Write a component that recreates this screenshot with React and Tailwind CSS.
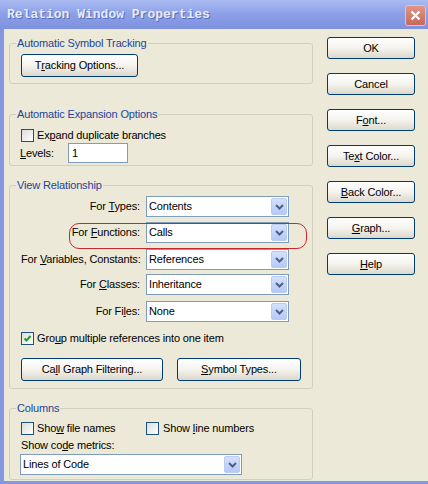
import React from 'react'

const font = { fontFamily: '"Liberation Sans", Arial, sans-serif', letterSpacing: '-0.15px' }

const Chevron = () => (
    <svg width="9" height="6" viewBox="0 0 9 6">
        <path d="M1 1 L4.5 4.5 L8 1" stroke="#4d6185" strokeWidth="2" fill="none" />
    </svg>
)

const Combo = ({ value, className = "" }) => (
    <div className={"h-[21px] bg-white border border-[#7f9db9] flex items-center " + className}>
        <span className="pl-[2px] text-[11px] leading-none text-black flex-1">{value}</span>
        <div className="w-[16px] h-[17px] mr-[1px] rounded-[2px] border border-[#b9cbf3] bg-gradient-to-b from-[#d4e1fc] to-[#b5c9f7] flex items-center justify-center">
            <Chevron />
        </div>
    </div>
)

const Button = ({ children, className = "" }) => (
    <div className={"rounded-[3px] border border-[#003c74] bg-gradient-to-b from-white via-[#f4f3ee] to-[#dcd8cb] flex items-center justify-center text-[11px] text-black " + className}>
        {children}
    </div>
)

const Checkbox = ({ checked }) => (
    <div className="w-[13px] h-[13px] border border-[#1c5180] bg-gradient-to-br from-[#dcdcd7] to-white flex items-center justify-center shrink-0">
        {checked && (
            <svg width="9" height="9" viewBox="0 0 9 9">
                <path d="M1.5 4.5 L3.5 6.5 L7.5 2" stroke="#21a121" strokeWidth="2" fill="none" />
            </svg>
        )}
    </div>
)

const Group = ({ title, children, className = "" }) => (
    <fieldset className={"border border-[#d0d0bf] rounded-[3px] px-[11px] " + className}>
        <legend className="-ml-[5px] px-[1px] text-[11px] leading-[14px] text-[#22449a]">{title}</legend>
        {children}
    </fieldset>
)

const Row = ({ label, value, className = "" }) => (
    <div className={"flex items-center gap-[6px] " + className}>
        <div className="w-[119px] text-right text-[11px] text-black whitespace-nowrap">{label}</div>
        <Combo value={value} className="w-[143px]" />
    </div>
)

export default function App() {
    return (
        <div className="w-[428px] h-[484px] bg-[#ece9d8] flex flex-col overflow-hidden" style={font}>

            {/* title bar */}
            <div className="h-[29px] shrink-0 bg-gradient-to-b from-[#a9bbf1] via-[#8c9fe6] to-[#7d91df] flex items-center justify-between pl-[7px] pr-[2px]">
                <span
                    className="text-[13px] font-bold text-[#e6ebfa] [text-shadow:1px_1px_0_#5a6cb8]"
                    style={{ fontFamily: '"Liberation Mono", "Courier New", monospace', letterSpacing: 0 }}
                >
                    Relation Window Properties
                </span>
                <div className="w-[21px] h-[21px] rounded-[3px] border border-[#eac0b8] bg-gradient-to-b from-[#dc9688] to-[#c4695b] flex items-center justify-center mt-[2px]">
                    <svg width="11" height="11" viewBox="0 0 11 11">
                        <path d="M1.5 1.5 L9.5 9.5 M9.5 1.5 L1.5 9.5" stroke="white" strokeWidth="2.2" />
                    </svg>
                </div>
            </div>

            <div className="flex flex-1 border-l-4 border-b-[3px] border-[#8396e0]">

                {/* left column */}
                <div className="w-[309px] pl-[5px] pt-[7px] flex flex-col">

                    <Group title="Automatic Symbol Tracking" className="pt-[4px] pb-[6px]">
                        <Button className="w-[117px] h-[23px]">T<u>r</u>acking Options...</Button>
                    </Group>

                    <Group title="Automatic Expansion Options" className="mt-[23px] pt-[6px] pb-[2px]">
                        <div className="h-[16px] flex items-center gap-[3px] text-[11px]">
                            <Checkbox />
                            <span>Ex<u>p</u>and duplicate branches</span>
                        </div>
                        <div className="flex items-center text-[11px] -ml-px">
                            <span className="w-[48px]"><u>L</u>evels:</span>
                            <div className="w-[60px] h-[20px] bg-white border border-[#7f9db9] flex items-center pl-[3px]">1</div>
                        </div>
                    </Group>

                    <Group title="View Relationship" className="mt-[12px] pt-[4px] pb-[7px] relative">
                        <Row label={<>For <u>T</u>ypes:</>} value="Contents" />
                        <Row label={<>For <u>F</u>unctions:</>} value="Calls" className="mt-[5px]" />
                        <Row label={<>For <u>V</u>ariables, Constants:</>} value="References" className="mt-[6px]" />
                        <Row label={<>For <u>C</u>lasses:</>} value="Inheritance" className="mt-[4px]" />
                        <Row label={<>For Fi<u>l</u>es:</>} value="None" className="mt-[6px]" />
                        <div className="mt-[8px] h-[16px] flex items-center gap-[3px] text-[11px]">
                            <Checkbox checked />
                            <span>Gro<u>u</u>p multiple references into one item</span>
                        </div>
                        <div className="mt-[12px] flex gap-[14px]">
                            <Button className="w-[142px] h-[23px]">Ca<u>l</u>l Graph Filtering...</Button>
                            <Button className="w-[124px] h-[23px]"><u>S</u>ymbol Types...</Button>
                        </div>
                        {/* red annotation */}
                        <div className="absolute left-[59px] top-[31px] w-[238px] h-[26px] border border-[#c8282c] rounded-[10px]" />
                    </Group>

                    <Group title="Columns" className="mt-[12px] pt-[5px] pb-[4px]">
                        <div className="h-[16px] flex items-center text-[11px]">
                            <div className="w-[125px] flex items-center gap-[3px]">
                                <Checkbox />
                                <span>Sho<u>w</u> file names</span>
                            </div>
                            <div className="flex items-center gap-[4px]">
                                <Checkbox />
                                <span>Show <u>l</u>ine numbers</span>
                            </div>
                        </div>
                        <div className="mt-[2px] h-[14px] leading-[14px] text-[11px]">Show co<u>d</u>e metrics:</div>
                        <Combo value="Lines of Code" className="mt-[2px] w-[222px] -ml-px" />
                    </Group>
                </div>

                {/* right column */}
                <div className="pl-[14px] pt-[8px] flex flex-col gap-[14px]">
                    <Button className="w-[88px] h-[22px]">OK</Button>
                    <Button className="w-[88px] h-[22px]">Cancel</Button>
                    <Button className="w-[88px] h-[22px]">F<u>o</u>nt...</Button>
                    <Button className="w-[88px] h-[22px]">Te<u>x</u>t Color...</Button>
                    <Button className="w-[88px] h-[22px]"><u>B</u>ack Color...</Button>
                    <Button className="w-[88px] h-[22px]"><u>G</u>raph...</Button>
                    <Button className="w-[88px] h-[22px]"><u>H</u>elp</Button>
                </div>
            </div>
        </div>
    )
}
